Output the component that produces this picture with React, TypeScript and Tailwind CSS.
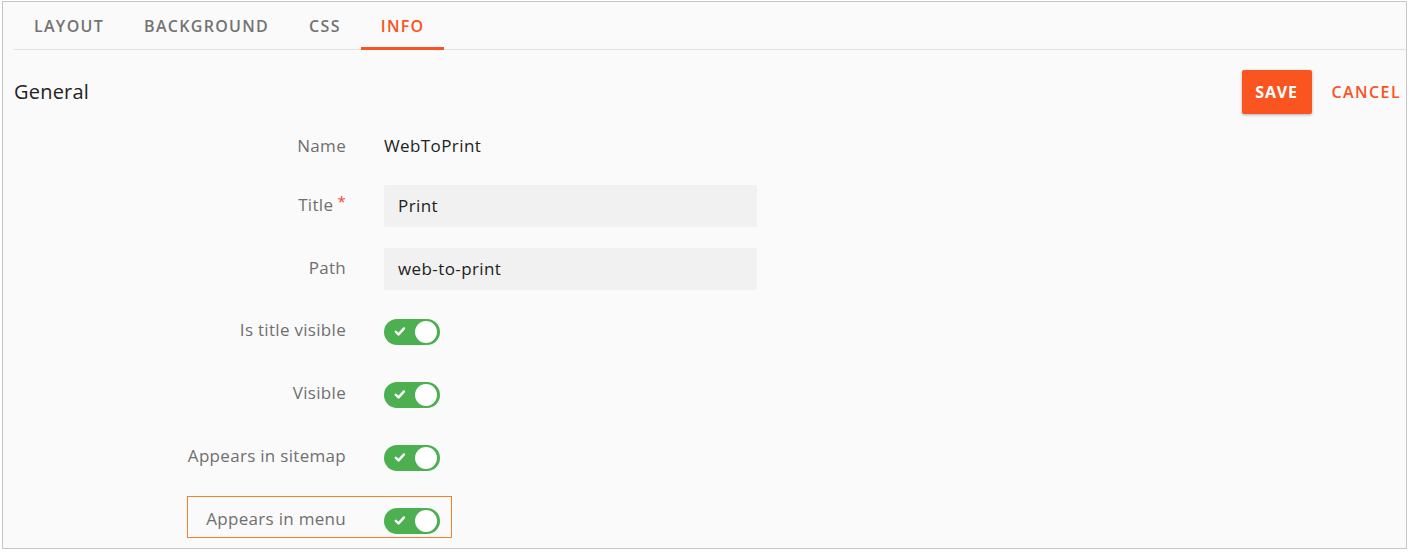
import React from "react";

const font = { fontFamily: "'Open Sans', Lato, sans-serif" };

function Toggle() {
  return (
    <div className="relative h-[26px] w-[56px] rounded-full bg-[#4caf50]">
      <svg className="absolute left-[10px] top-[7px]" width="12" height="11" viewBox="0 0 12 11">
        <path d="M1.8 5.8 L4.6 8.4 L10 2.4" fill="none" stroke="#fff" strokeWidth="2.4" strokeLinecap="round" strokeLinejoin="round" />
      </svg>
      <div className="absolute right-[3px] top-[2px] h-[22px] w-[22px] rounded-full bg-white" />
    </div>
  );
}

function Row({
  label,
  children,
  required,
  highlight,
  lift = "pb-[5px]",
}: {
  label: string;
  children: React.ReactNode;
  required?: boolean;
  highlight?: boolean;
  lift?: string;
}) {
  return (
    <div className="relative flex h-[42px] items-center">
      {highlight && <div className="absolute left-[173px] top-[-4px] h-[42px] w-[265px] border border-[#f58025]" />}
      <div className={"relative w-[332px] text-right text-[17px] tracking-[0.3px] text-[#6f6f6f] " + lift}>
        {label}
        {required && <span className="relative top-[-4px] text-[15px] text-[#f44336]"> *</span>}
      </div>
      <div className="ml-[38px] flex">{children}</div>
    </div>
  );
}

function Input({ value }: { value: string }) {
  return (
    <div className="flex h-[42px] w-[373px] items-center rounded-[2px] bg-[#f1f1f1] px-[14px] text-[17px] tracking-[0.4px] text-[#222]">
      {value}
    </div>
  );
}

export default function App() {
  const tabs = ["LAYOUT", "BACKGROUND", "CSS", "INFO"];
  return (
    <div className="h-[553px] w-[1409px] bg-white pl-[2px] pt-[1px]" style={font}>
      <div className="h-[548px] w-[1405px] border border-[#c6c6c6] bg-[#fafafa] pl-[11px]">
        <div className="flex h-[48px] border-b border-[#e0e0e0]">
          {tabs.map((t) => (
            <div
              key={t}
              className={
                "flex h-[48px] items-center px-[20px] pb-[1px] text-[16px] font-semibold tracking-[1.3px] " +
                (t === "INFO" ? "border-b-[3px] border-[#fa5220] pt-[3px] text-[#fa5220]" : "text-[#737373]")
              }
            >
              {t}
            </div>
          ))}
        </div>
        <div className="mt-[20px] flex h-[44px] items-center pr-[5px]">
          <div className="flex-1 text-[20px] tracking-[0.2px] text-[#222]">General</div>
          <button className="h-[44px] w-[70px] rounded-[2px] bg-[#fa5420] text-[16px] font-bold tracking-[0.8px] text-white shadow-[0_1px_3px_rgba(0,0,0,0.3)]">
            SAVE
          </button>
          <button className="ml-[20px] h-[44px] text-[16px] font-semibold tracking-[1.4px] text-[#fa5220]">CANCEL</button>
        </div>
        <div className="mt-[12px] flex flex-col">
          <Row label="Name" lift="pb-[3px]">
            <span className="pb-[3px] text-[17px] tracking-[0.4px] text-[#222]">WebToPrint</span>
          </Row>
          <div className="h-[17px]" />
          <Row label="Title" required lift="pb-[2px]">
            <Input value="Print" />
          </Row>
          <div className="h-[21px]" />
          <Row label="Path" lift="pb-[2px]">
            <Input value="web-to-print" />
          </Row>
          <div className="h-[21px]" />
          <Row label="Is title visible">
            <Toggle />
          </Row>
          <div className="h-[21px]" />
          <Row label="Visible">
            <Toggle />
          </Row>
          <div className="h-[21px]" />
          <Row label="Appears in sitemap">
            <Toggle />
          </Row>
          <div className="h-[21px]" />
          <Row label="Appears in menu" highlight>
            <Toggle />
          </Row>
        </div>
      </div>
    </div>
  );
}
